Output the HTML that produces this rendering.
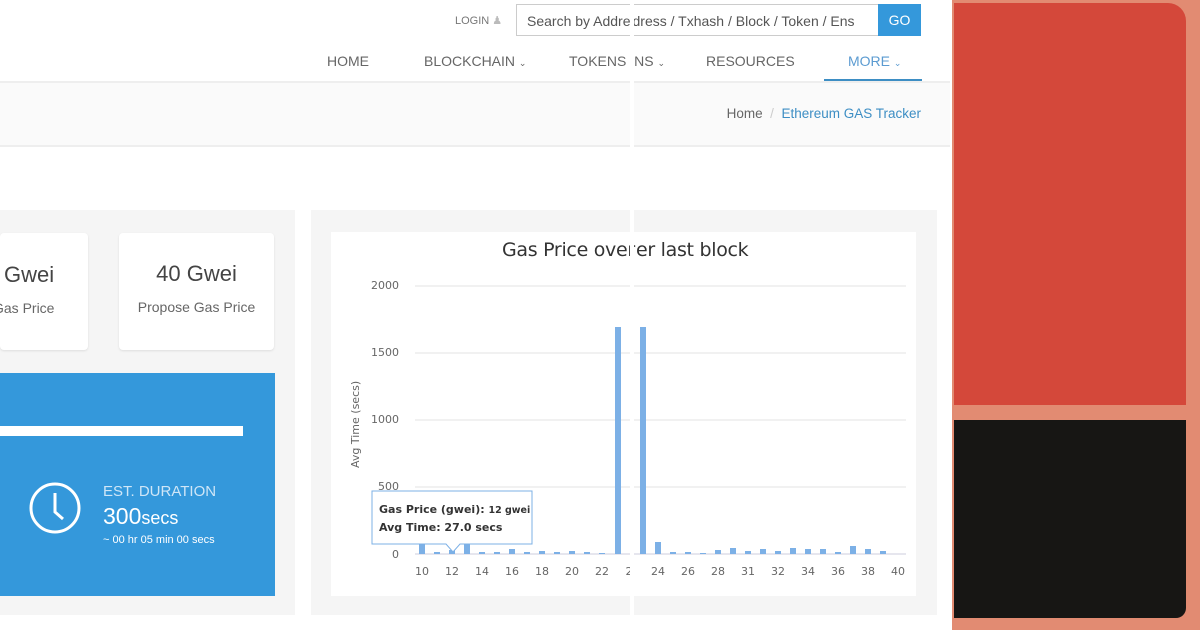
<!DOCTYPE html>
<html><head><meta charset="utf-8"><style>
*{margin:0;padding:0;box-sizing:border-box}
body{width:1200px;height:630px;overflow:hidden;background:#fff;font-family:"Liberation Sans",sans-serif;position:relative;color:#555}
.a{position:absolute}
</style></head><body>
<div class="a" style="left:455px;top:14px;font-size:11px;color:#777">LOGIN <span style="color:#bbb">&#9823;</span></div>
<div class="a" style="left:516px;top:4px;width:363px;height:32px;border:1px solid #ccc;font-size:14px;color:#555;padding:8px 10px">Search by Addre<span style="margin-left:2px"></span>dress / Txhash / Block / Token / Ens</div>
<div class="a" style="left:878px;top:4px;width:43px;height:32px;background:#3498db;color:#fff;font-size:14px;text-align:center;line-height:32px">GO</div>
<div class="a" style="top:53px;left:327px;font-size:14px;color:#666">HOME</div>
<div class="a" style="top:53px;left:424px;font-size:14px;color:#666">BLOCKCHAIN <span style="font-size:9px">&#8964;</span></div>
<div class="a" style="top:53px;left:569px;font-size:14px;color:#666">TOKENS &nbsp;NS <span style="font-size:9px">&#8964;</span></div>
<div class="a" style="top:53px;left:706px;font-size:14px;color:#666">RESOURCES</div>
<div class="a" style="top:53px;left:848px;font-size:14px;color:#5b9bd1">MORE <span style="font-size:9px">&#8964;</span></div>
<div class="a" style="left:824px;top:79px;width:98px;height:3px;background:#3d8ec4"></div>
<div class="a" style="left:0;top:81px;width:950px;height:66px;background:#fafafa;border-top:2px solid #eee;border-bottom:2px solid #eee"></div>
<div class="a" style="top:106px;right:279px;font-size:13.5px;color:#666;white-space:nowrap">Home &nbsp;<span style="color:#ccc">/</span>&nbsp; <span style="color:#3d8ec4">Ethereum GAS Tracker</span></div>
<div class="a" style="left:0;top:210px;width:295px;height:405px;background:#f5f5f5"></div>
<div class="a" style="left:0;top:233px;width:88px;height:117px;background:#fff;border-radius:4px;box-shadow:0 1px 2px #ddd"></div>
<div class="a" style="left:4px;top:262px;font-size:22px;color:#444;white-space:nowrap">Gwei</div>
<div class="a" style="left:-7px;top:300px;font-size:14px;color:#666;white-space:nowrap">Gas Price</div>
<div class="a" style="left:119px;top:233px;width:155px;height:117px;background:#fff;border-radius:4px;box-shadow:0 1px 2px #ddd;text-align:center"><div style="font-size:22px;color:#444;margin-top:28px">40 Gwei</div><div style="font-size:14px;color:#666;margin-top:12px">Propose Gas Price</div></div>
<div class="a" style="left:0;top:373px;width:275px;height:223px;background:#3498db"></div>
<div class="a" style="left:0;top:426px;width:243px;height:10px;background:#fff"></div>
<svg class="a" style="left:29px;top:482px" width="54" height="54"><circle cx="26" cy="26" r="24" fill="none" stroke="#fff" stroke-width="3"/><path d="M26 11 V30 L34 37" fill="none" stroke="#fff" stroke-width="3"/></svg>
<div class="a" style="left:103px;top:483px;color:#cfe6f7;font-size:15px">EST. DURATION</div>
<div class="a" style="left:103px;top:503px;color:#fff;font-size:23px">300<span style="font-size:18px">secs</span></div>
<div class="a" style="left:103px;top:534px;color:#fff;font-size:11px">~ 00 hr 05 min 00 secs</div>
<div class="a" style="left:311px;top:210px;width:626px;height:405px;background:#f5f5f5"></div>
<div class="a" style="left:331px;top:232px;width:585px;height:364px;background:#fff"></div>
<div class="a" style="left:502px;top:239px;font-size:19px;color:#333;font-family:'DejaVu Sans',sans-serif;letter-spacing:-.3px">Gas Price over</div>
<div class="a" style="left:636px;top:239px;font-size:19px;color:#333;font-family:'DejaVu Sans',sans-serif;letter-spacing:-.3px">er last block</div>
<svg class="a" style="left:331px;top:232px" width="585" height="364" font-family="DejaVu Sans" font-size="11" fill="#666">
<g stroke="#e3e3e3"><line x1="84" x2="575" y1="54" y2="54"/><line x1="84" x2="575" y1="121" y2="121"/><line x1="84" x2="575" y1="188" y2="188"/><line x1="84" x2="575" y1="255" y2="255"/><line x1="84" x2="575" y1="322" y2="322" stroke="#ccd"/></g>
<g text-anchor="end"><text x="68" y="57">2000</text><text x="68" y="124">1500</text><text x="68" y="191">1000</text><text x="68" y="258">500</text><text x="68" y="326">0</text></g>
<text transform="translate(28,236) rotate(-90)" font-size="11">Avg Time (secs)</text>
<g text-anchor="middle"><text x="91" y="343">10</text><text x="121" y="343">12</text><text x="151" y="343">14</text><text x="181" y="343">16</text><text x="211" y="343">18</text><text x="241" y="343">20</text><text x="271" y="343">22</text><text x="298" y="343">2</text><text x="327" y="343">24</text><text x="357" y="343">26</text><text x="387" y="343">28</text><text x="417" y="343">31</text><text x="447" y="343">32</text><text x="477" y="343">34</text><text x="507" y="343">36</text><text x="537" y="343">38</text><text x="567" y="343">40</text></g>
</svg>
<svg class="a" style="left:331px;top:232px" width="585" height="364">
<g fill="#7cb0e6">
<rect x="88" y="312" width="6" height="10"/><rect x="103" y="320" width="6" height="2"/><rect x="118" y="318" width="6" height="4"/><rect x="133" y="312" width="6" height="10"/><rect x="148" y="320" width="6" height="2"/><rect x="163" y="320" width="6" height="2"/><rect x="178" y="317" width="6" height="5"/><rect x="193" y="320" width="6" height="2"/><rect x="208" y="319" width="6" height="3"/><rect x="223" y="320" width="6" height="2"/><rect x="238" y="319" width="6" height="3"/><rect x="253" y="320" width="6" height="2"/><rect x="268" y="321" width="6" height="1"/><rect x="284" y="95" width="6" height="227"/>
<rect x="309" y="95" width="6" height="227"/><rect x="324" y="310" width="6" height="12"/><rect x="339" y="320" width="6" height="2"/><rect x="354" y="320" width="6" height="2"/><rect x="369" y="321" width="6" height="1"/><rect x="384" y="318" width="6" height="4"/><rect x="399" y="316" width="6" height="6"/><rect x="414" y="319" width="6" height="3"/><rect x="429" y="317" width="6" height="5"/><rect x="444" y="319" width="6" height="3"/><rect x="459" y="316" width="6" height="6"/><rect x="474" y="317" width="6" height="5"/><rect x="489" y="317" width="6" height="5"/><rect x="504" y="320" width="6" height="2"/><rect x="519" y="314" width="6" height="8"/><rect x="534" y="317" width="6" height="5"/><rect x="549" y="319" width="6" height="3"/>
</g>
<path d="M41 259 H201 V312 H129 L122 320 L115 312 H41 Z" fill="#fff" fill-opacity=".95" stroke="#7cb0e6"/>
<text x="48" y="281" font-family="DejaVu Sans" font-size="11" fill="#333" font-weight="bold">Gas Price (gwei): <tspan font-size="9.5">12 gwei</tspan></text>
<text x="48" y="299" font-family="DejaVu Sans" font-size="11" fill="#333" font-weight="bold">Avg Time: 27.0 secs</text>
</svg>
<div class="a" style="left:630px;top:0;width:4px;height:630px;background:#fff"></div>
<div class="a" style="left:952px;top:0;width:248px;height:630px;background:#e28b72"></div>
<div class="a" style="left:954px;top:3px;width:232px;height:402px;background:#d4483a;border-radius:0 18px 0 0"></div>
<div class="a" style="left:954px;top:420px;width:232px;height:198px;background:#171614;border-radius:0 0 10px 0"></div>
</body></html>
